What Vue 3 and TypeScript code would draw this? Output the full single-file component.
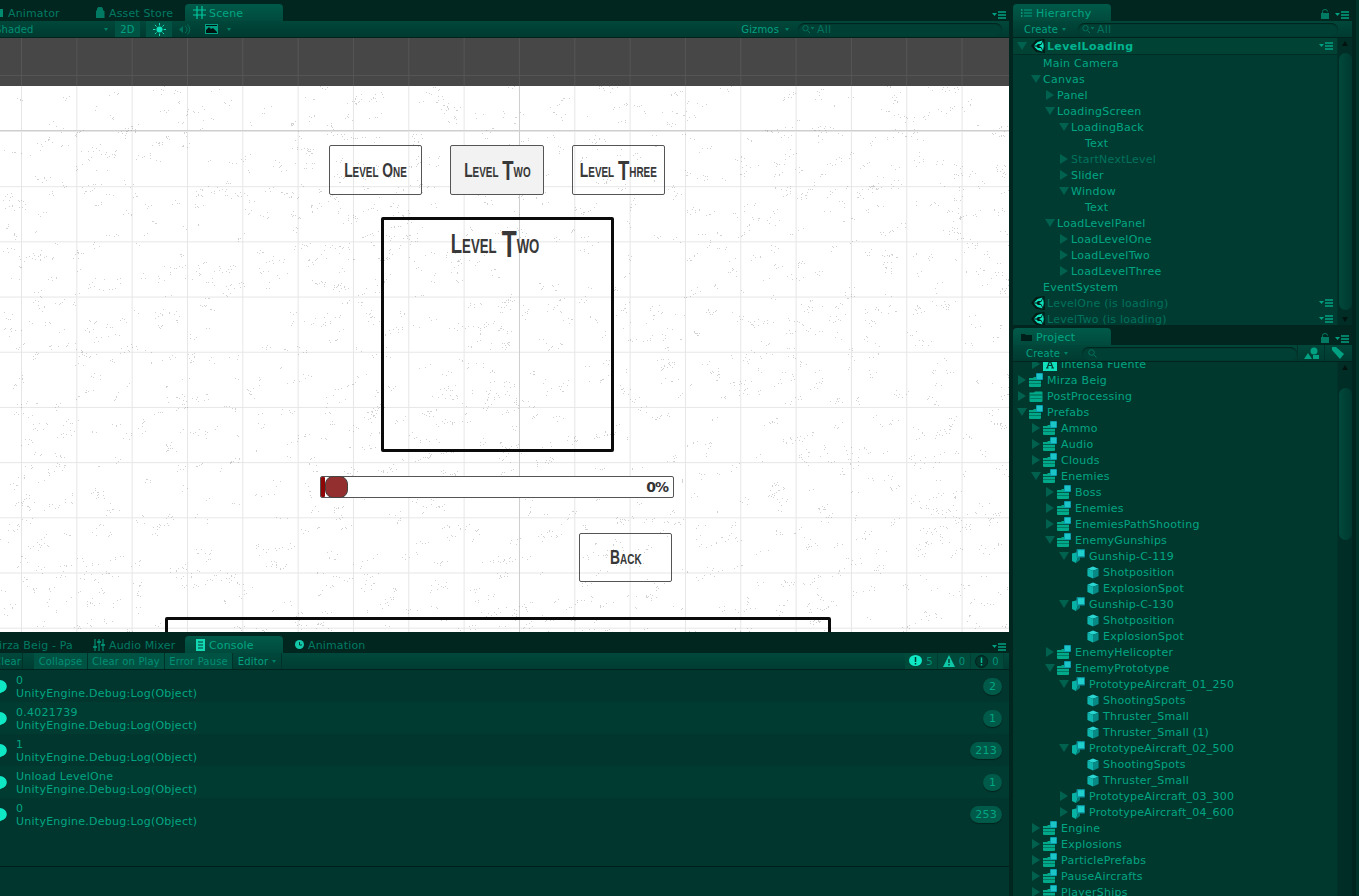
<script setup lang="ts">
type Row = { d: number; t: string; a?: 'o' | 'c'; i?: string; dim?: boolean; bold?: boolean; menu?: boolean }

const hierarchy: Row[] = [
  { d: 0, t: 'LevelLoading', a: 'o', i: 'unity', bold: true, menu: true },
  { d: 1, t: 'Main Camera' },
  { d: 1, t: 'Canvas', a: 'o' },
  { d: 2, t: 'Panel', a: 'c' },
  { d: 2, t: 'LoadingScreen', a: 'o' },
  { d: 3, t: 'LoadingBack', a: 'o' },
  { d: 4, t: 'Text' },
  { d: 3, t: 'StartNextLevel', a: 'c', dim: true },
  { d: 3, t: 'Slider', a: 'c' },
  { d: 3, t: 'Window', a: 'o' },
  { d: 4, t: 'Text' },
  { d: 2, t: 'LoadLevelPanel', a: 'o' },
  { d: 3, t: 'LoadLevelOne', a: 'c' },
  { d: 3, t: 'LoadLevelTwo', a: 'c' },
  { d: 3, t: 'LoadLevelThree', a: 'c' },
  { d: 1, t: 'EventSystem' },
  { d: 0, t: 'LevelOne (is loading)', i: 'unity', dim: true, menu: true },
  { d: 0, t: 'LevelTwo (is loading)', i: 'unity', dim: true, menu: true },
]

const project: Row[] = [
  { d: 1, t: 'Intensa Fuente', a: 'c', i: 'font' },
  { d: 0, t: 'Mirza Beig', a: 'c', i: 'pack' },
  { d: 0, t: 'PostProcessing', a: 'c', i: 'folder' },
  { d: 0, t: 'Prefabs', a: 'o', i: 'pack' },
  { d: 1, t: 'Ammo', a: 'c', i: 'pack' },
  { d: 1, t: 'Audio', a: 'c', i: 'pack' },
  { d: 1, t: 'Clouds', a: 'c', i: 'pack' },
  { d: 1, t: 'Enemies', a: 'o', i: 'pack' },
  { d: 2, t: 'Boss', a: 'c', i: 'pack' },
  { d: 2, t: 'Enemies', a: 'c', i: 'pack' },
  { d: 2, t: 'EnemiesPathShooting', a: 'c', i: 'pack' },
  { d: 2, t: 'EnemyGunships', a: 'o', i: 'pack' },
  { d: 3, t: 'Gunship-C-119', a: 'o', i: 'model' },
  { d: 4, t: 'Shotposition', i: 'cube' },
  { d: 4, t: 'ExplosionSpot', i: 'cube' },
  { d: 3, t: 'Gunship-C-130', a: 'o', i: 'model' },
  { d: 4, t: 'Shotposition', i: 'cube' },
  { d: 4, t: 'ExplosionSpot', i: 'cube' },
  { d: 2, t: 'EnemyHelicopter', a: 'c', i: 'pack' },
  { d: 2, t: 'EnemyPrototype', a: 'o', i: 'pack' },
  { d: 3, t: 'PrototypeAircraft_01_250', a: 'o', i: 'model' },
  { d: 4, t: 'ShootingSpots', i: 'cube' },
  { d: 4, t: 'Thruster_Small', i: 'cube' },
  { d: 4, t: 'Thruster_Small (1)', i: 'cube' },
  { d: 3, t: 'PrototypeAircraft_02_500', a: 'o', i: 'model' },
  { d: 4, t: 'ShootingSpots', i: 'cube' },
  { d: 4, t: 'Thruster_Small', i: 'cube' },
  { d: 3, t: 'PrototypeAircraft_03_300', a: 'c', i: 'model' },
  { d: 3, t: 'PrototypeAircraft_04_600', a: 'c', i: 'model' },
  { d: 1, t: 'Engine', a: 'c', i: 'pack' },
  { d: 1, t: 'Explosions', a: 'c', i: 'pack' },
  { d: 1, t: 'ParticlePrefabs', a: 'c', i: 'pack' },
  { d: 1, t: 'PauseAircrafts', a: 'c', i: 'pack' },
  { d: 1, t: 'PlayerShips', a: 'c', i: 'pack' },
]

const logs = [
  { m: '0', n: 2 },
  { m: '0.4021739', n: 1 },
  { m: '1', n: 213 },
  { m: 'Unload LevelOne', n: 1 },
  { m: '0', n: 253 },
]

let seed = 7
const rnd = () => {
  seed = (seed * 16807) % 2147483647
  return seed / 2147483647
}
const makeSpeckle = (count: number) => {
  let d = ''
  for (let i = 0; i < count; i++) {
    const x = Math.round(rnd() * 1009)
    const y = Math.round(rnd() * 546)
    const n = 2 + Math.floor(rnd() * 4)
    for (let k = 0; k < n; k++) {
      const px = x + k + Math.round(rnd() * 10) - 5
      const py = y - k + Math.round(rnd() * 5)
      d += `M${px} ${py}h1v1h-1z`
    }
  }
  return d
}
const speckle = makeSpeckle(1500)
const indent = (r: Row) => r.d * 14
</script>

<template>
  <div class="editor">
    <svg class="defs" width="0" height="0" aria-hidden="true">
      <defs>
        <symbol id="unity" viewBox="0 0 14 14">
          <path d="M0 7 5 1 13.5 0 14 14 5 13Z" fill="#001a16" />
          <path d="M3 6.4 6.5 3 11.5 1.6 10 5H7L5.5 6.4Z" fill="#0fe0bc" />
          <path d="M3 7.6H5.5L7 9h3l1.5 3.4L6.5 11Z" fill="#0fe0bc" />
          <path d="M8 7 10.6 5.6 12 2.6 12.8 7 12 11.4 10.6 8.4Z" fill="#0fe0bc" />
        </symbol>
        <symbol id="folder" viewBox="0 0 14 14">
          <path d="M.5 3.5h4.5l1-1h6.5a1 1 0 0 1 1 1v8.5a1 1 0 0 1-1 1h-11a1 1 0 0 1-1-1Z" fill="#00a98a" />
          <path d="M.5 6h13" stroke="#005a49" />
          <path d="M.5 9.5h13" stroke="#007c66" />
        </symbol>
        <symbol id="pack" viewBox="0 0 14 14">
          <path d="M0 5h4l1-1h6a1 1 0 0 1 1 1v8a1 1 0 0 1-1 1H1a1 1 0 0 1-1-1Z" fill="#00a98a" />
          <path d="M0 7.5h12" stroke="#005a49" />
          <path d="M0 10.5h12" stroke="#007c66" />
          <rect x="7" y="0" width="7" height="7" rx="1" fill="#0a9fae" />
          <rect x="8" y="1" width="5" height="5" fill="#1cc6c6" />
        </symbol>
        <symbol id="model" viewBox="0 0 14 14">
          <path d="M1 4.5 7 3v5l-2 6-4-2Z" fill="#06b3a5" />
          <path d="M5 14 7 8h2v3Z" fill="#047e78" />
          <rect x="5.5" y="0" width="8.5" height="8.5" rx="1" fill="#0a8f98" />
          <rect x="7" y="1.2" width="6" height="6" fill="#1fd0cc" />
        </symbol>
        <symbol id="cube" viewBox="0 0 14 14">
          <path d="M7 0 13.5 2.5 7 5 .5 2.5Z" fill="#2ad6d2" />
          <path d="M.5 2.5 7 5v9L.5 11Z" fill="#0fb4ac" />
          <path d="M13.5 2.5 7 5v9l6.5-3Z" fill="#078a86" />
        </symbol>
        <symbol id="fontA" viewBox="0 0 14 14">
          <rect width="14" height="14" fill="#12e0bc" />
          <path d="M3 11.5h2.6v-1H5l.5-1.4h3l.5 1.4h-.7v1H11v-1h-.7L7.7 3H6.2L3.7 10.5H3Zm2.9-3.4L7 5l1.1 3.1Z" fill="#003a30" />
        </symbol>
        <symbol id="bubble" viewBox="0 0 16 16">
          <path d="M8 1a7 6.4 0 0 1 1.5 12.6L5 15.5l.8-2.2A6.5 6.5 0 0 1 8 1Z" fill="#0fe8c4" />
        </symbol>
        <symbol id="menu" viewBox="0 0 14 8">
          <path d="M0 2h5L2.5 5Z" fill="#00a182" />
          <path d="M6 1h8M6 4h8M6 7h8" stroke="#00a182" stroke-width="1.4" />
        </symbol>
        <symbol id="lock" viewBox="0 0 8 10">
          <rect y="4" width="8" height="6" fill="#007a63" />
          <path d="M1.5 4V2.5a2.5 2 0 0 1 5 0" fill="none" stroke="#007a63" />
        </symbol>
      </defs>
    </svg>

    <main class="left">
      <section class="scene-panel">
        <div class="tabs">
          <div class="tab tab-animator"><i class="grip"></i><span>Animator</span></div>
          <div class="tab tab-store">
            <svg width="10" height="11" viewBox="0 0 10 11"><path d="M0 4h8v7H0Z M1.5 4V2a2.5 2 0 0 1 5 0v2" fill="#007a63" stroke="#007a63" /></svg>
            <span>Asset Store</span>
          </div>
          <div class="tab active">
            <svg width="13" height="13" viewBox="0 0 13 13"><path d="M4 0v13M9 0v13M0 4h13M0 9h13" stroke="#00c9a2" stroke-width="1.2" /></svg>
            <span>Scene</span>
          </div>
          <svg class="menu-ico" width="14" height="8"><use href="#menu" /></svg>
        </div>
        <div class="toolbar scene-tools">
          <span class="shaded">Shaded</span><b class="caret c1"></b>
          <span class="tbtn two-d">2D</span>
          <span class="tbtn sun">
            <svg width="13" height="13" viewBox="0 0 13 13"><circle cx="6.5" cy="6.5" r="3" fill="#12e0bc" /><path d="M6.5 0v2.4M6.5 10.6V13M0 6.5h2.4M10.6 6.5H13M1.9 1.9l1.7 1.7M9.4 9.4l1.7 1.7M1.9 11.1l1.7-1.7M9.4 3.6l1.7-1.7" stroke="#12e0bc" /></svg>
          </span>
          <span class="sound">
            <svg width="14" height="11" viewBox="0 0 14 11"><path d="M0 5.5 4 2v7Z" fill="#00705c" /><path d="M6 2a4 4 0 0 1 0 7M8.5 0.5a7 7 0 0 1 0 10" fill="none" stroke="#00705c" /></svg>
          </span>
          <span class="pic">
            <svg width="13" height="10" viewBox="0 0 13 10"><rect width="13" height="10" fill="#00a182" /><path d="M1 9V6l3-3 2 2 2-1 4 4v1Z" fill="#00120f" /><rect x="1" y="1" width="11" height="1" fill="#00120f" /></svg>
          </span>
          <b class="caret c2"></b>
          <span class="spacer"></span>
          <span class="gizmos">Gizmos</span><b class="caret c3"></b>
          <div class="search scene-search">
            <svg width="13" height="8" viewBox="0 0 13 8"><circle cx="3.5" cy="3.2" r="2.7" fill="none" stroke="#00725d" /><path d="M5.5 5.5 8 8" stroke="#00725d" /><path d="M8.5 2h4L10.5 4.5Z" fill="#00725d" /></svg>
            <span>All</span>
          </div>
        </div>
        <div class="viewport">
          <div class="void"></div>
          <div class="stage">
            <svg class="speckle" width="1009" height="546" viewBox="0 0 1009 546"><path :d="speckle" fill="#8a8a8a" fill-opacity="0.38" /></svg>
            <div class="ui">
              <div class="level-buttons">
                <div class="btn hand"><span class="sx">Level One</span></div>
                <div class="btn hand pressed"><span class="sx">Level <span class="tee">T</span>wo</span></div>
                <div class="btn hand"><span class="sx">Level <span class="tee">T</span>hree</span></div>
              </div>
              <div class="window">
                <div class="hand win-title"><span class="sx">Level <span class="tee">T</span>wo</span></div>
              </div>
              <div class="slider">
                <span class="fill"></span>
                <span class="knob"></span>
                <span class="pct">0%</span>
              </div>
              <div class="back-row"><div class="btn hand back"><span class="sx">Back</span></div></div>
            </div>
            <div class="big-panel"></div>
          </div>
        </div>
      </section>

      <section class="console-panel">
        <div class="tabs bottom-tabs">
          <div class="tab tab-mirza"><span>irza Beig - Pa</span></div>
          <div class="tab tab-mixer">
            <svg width="12" height="12" viewBox="0 0 12 12"><path d="M2 0v12M6 0v12M10 0v12" stroke="#00a182" /><path d="M0 8h4M4 3h4M8 6h4" stroke="#00a182" stroke-width="1.6" /></svg>
            <span>Audio Mixer</span>
          </div>
          <div class="tab active tab-console">
            <svg width="9" height="12" viewBox="0 0 9 12"><rect width="9" height="12" fill="#12d8b4" /><path d="M2 3h5M2 6h5M2 9h5" stroke="#003a30" /></svg>
            <span>Console</span>
          </div>
          <div class="tab tab-anim">
            <svg width="9" height="9" viewBox="0 0 9 9"><circle cx="4.5" cy="4.5" r="4.5" fill="#12c8a8" /><path d="M4.5 2v3H7" fill="none" stroke="#003a30" /></svg>
            <span>Animation</span>
          </div>
          <svg class="menu-ico" width="14" height="8"><use href="#menu" /></svg>
        </div>
        <div class="toolbar console-tools">
          <span class="ct clear">Clear</span>
          <span class="ct pressed collapse">Collapse</span>
          <span class="ct pressed cop">Clear on Play</span>
          <span class="ct pressed err">Error Pause</span>
          <span class="ct editor-btn">Editor<b class="caret"></b></span>
          <span class="spacer"></span>
          <div class="counters">
            <span class="counter"><svg width="13" height="12" viewBox="0 0 13 12"><ellipse cx="6.5" cy="5.5" rx="6.5" ry="5.5" fill="#0fe8c4" /><path d="M6.5 2v5M6.5 8v1.5" stroke="#003a30" stroke-width="1.5" /></svg>5</span>
            <span class="counter"><svg width="12" height="12" viewBox="0 0 12 12"><path d="M6 0 12 12H0Z" fill="#0fc8a8" /><path d="M6 4v4M6 9v1.5" stroke="#003a30" stroke-width="1.4" /></svg>0</span>
            <span class="counter"><svg width="13" height="13" viewBox="0 0 13 13"><circle cx="6.5" cy="6.5" r="6" fill="#00352c" stroke="#00201b" /><path d="M6.5 2.5v5.5M6.5 9v1.5" stroke="#0bb896" stroke-width="1.5" /></svg>0</span>
          </div>
        </div>
        <div class="logs">
          <div v-for="(l, i) in logs" :key="i" class="log" :class="{ alt: i % 2 === 1 }">
            <svg class="bubble" width="16" height="16"><use href="#bubble" /></svg>
            <div class="log-text">
              <div>{{ l.m }}</div>
              <div>UnityEngine.Debug:Log(Object)</div>
            </div>
            <span class="badge">{{ l.n }}</span>
          </div>
        </div>
        <div class="status"></div>
      </section>
    </main>

    <aside class="right">
      <section class="hier">
        <div class="tabs side-tabs">
          <div class="tab active side-tab">
            <svg width="11" height="8" viewBox="0 0 11 8"><path d="M3 1h8M3 4h8M3 7h8" stroke="#00a182" stroke-width="1.2" /><path d="M0 1h1.5M0 4h1.5M0 7h1.5" stroke="#12d8b4" stroke-width="1.2" /></svg>
            <span>Hierarchy</span>
          </div>
          <svg class="lock" width="8" height="10"><use href="#lock" /></svg>
          <svg class="menu-ico" width="14" height="8"><use href="#menu" /></svg>
        </div>
        <div class="toolbar side-tools">
          <span class="create hier-create">Create<b class="caret"></b></span>
          <div class="search side-search">
            <svg width="13" height="8" viewBox="0 0 13 8"><circle cx="3.5" cy="3.2" r="2.7" fill="none" stroke="#00725d" /><path d="M5.5 5.5 8 8" stroke="#00725d" /><path d="M8.5 2h4L10.5 4.5Z" fill="#00725d" /></svg>
            <span>All</span>
          </div>
        </div>
        <div class="tree-wrap hier-wrap">
          <div class="tree">
            <div v-for="(r, i) in hierarchy" :key="i" class="row hier-row" :class="{ scene: r.bold, dim: r.dim }" :style="{ paddingLeft: indent(r) + 'px' }">
              <span class="arrow" :class="r.a"></span>
              <svg v-if="r.i" class="ico" width="14" height="14"><use href="#unity" /></svg>
              <span class="label">{{ r.t }}</span>
              <svg v-if="r.menu" class="row-menu" width="14" height="8"><use href="#menu" /></svg>
            </div>
          </div>
          <div class="scrollbar">
            <i class="up"></i>
            <span class="thumb"></span>
            <i class="down"></i>
          </div>
        </div>
      </section>

      <section class="proj">
        <div class="tabs side-tabs proj-tabs">
          <div class="tab active side-tab">
            <svg width="11" height="8" viewBox="0 0 11 8"><path d="M0 1h4l1 1h6v6H0Z" fill="#001f1a" /></svg>
            <span>Project</span>
          </div>
          <svg class="lock" width="8" height="10"><use href="#lock" /></svg>
          <svg class="menu-ico" width="14" height="8"><use href="#menu" /></svg>
        </div>
        <div class="toolbar side-tools">
          <span class="create proj-create">Create<b class="caret"></b></span>
          <div class="search proj-search">
            <svg width="9" height="9" viewBox="0 0 9 9"><circle cx="3.5" cy="3.5" r="2.8" fill="none" stroke="#00725d" /><path d="M5.5 5.5 8.5 8.5" stroke="#00725d" /></svg>
          </div>
          <span class="tool-ico">
            <svg width="15" height="12" viewBox="0 0 15 12"><circle cx="10" cy="4" r="3.5" fill="#00a182" /><path d="M0 12 4 6l4 6Z" fill="#00a182" /><rect x="9" y="8" width="6" height="4" fill="#00a182" /></svg>
          </span>
          <span class="tool-ico">
            <svg width="12" height="12" viewBox="0 0 12 12"><path d="M0 3V0h4l8 7-4 5Z" fill="#00a182" /></svg>
          </span>
        </div>
        <div class="tree-wrap proj-wrap">
          <div class="tree proj-tree">
            <div v-for="(r, i) in project" :key="i" class="row proj-row" :style="{ paddingLeft: indent(r) + 'px' }">
              <span class="arrow" :class="r.a"></span>
              <svg class="ico" :class="{ small: r.i === 'cube' }" width="14" height="14"><use :href="r.i === 'font' ? '#fontA' : '#' + r.i" /></svg>
              <span class="label">{{ r.t }}</span>
            </div>
          </div>
          <div class="scrollbar proj-bar">
            <i class="up"></i>
            <span class="thumb"></span>
          </div>
        </div>
      </section>
    </aside>
    <div class="edge"></div>
  </div>
</template>

<style>
html, body { margin: 0; background: #00241e; overflow: hidden; }
</style>

<style scoped>
.editor {
  width: 1359px;
  height: 896px;
  display: grid;
  grid-template-columns: 1009px 339px 3px;
  column-gap: 4px;
  background: #00261f;
  color: #00a683;
  font: 11px "DejaVu Sans", sans-serif;
  letter-spacing: 0.25px;
  overflow: hidden;
  position: relative;
}
.defs { position: absolute; }
.edge { background: #00342b; }
.left { display: flex; flex-direction: column; height: 896px; overflow: hidden; }
.scene-panel { height: 632px; display: flex; flex-direction: column; overflow: hidden; }
.console-panel { flex: 1; display: flex; flex-direction: column; min-height: 0; }

.tabs {
  height: 21px;
  flex: none;
  display: flex;
  position: relative;
  align-items: flex-end;
  box-sizing: border-box;
  padding-top: 4px;
  background: #00261f;
  white-space: nowrap;
}
.tab {
  height: 17px;
  display: flex;
  align-items: center;
  gap: 3px;
  box-sizing: border-box;
  color: #007a63;
  font-size: 11px;
  letter-spacing: 0.15px;
}
.tab span { padding-top: 2px; }
.tab.active {
  width: 98px;
  background: linear-gradient(#005a49, #004a3c);
  border-radius: 4px 4px 0 0;
  color: #00a683;
  padding-left: 8px;
}
.grip { width: 3px; height: 8px; background: #008a70; flex: none; margin-right: 2px; }
.tab-animator { width: 96px; }
.tab-store { width: 89px; }
.menu-ico { position: absolute; right: 3px; bottom: 2px; }

.toolbar {
  height: 17px;
  flex: none;
  display: flex;
  align-items: center;
  background: linear-gradient(#00473a, #003a30);
  border-bottom: 1px solid #00231d;
  box-sizing: border-box;
  color: #008f74;
  font-size: 10px;
  letter-spacing: 0.15px;
  white-space: nowrap;
}
.spacer { flex: 1; }
.caret {
  display: inline-block;
  width: 0;
  height: 0;
  border: 2.5px solid transparent;
  border-top: 3px solid #00826a;
  border-bottom: 0;
}
.shaded { margin-left: -5px; width: 109px; flex: none; }
.c1 { margin-right: 7px; }
.tbtn { height: 16px; display: flex; align-items: center; justify-content: center; background: #005243; }
.two-d { width: 25px; color: #00a182; margin-right: 6px; }
.sun { width: 26px; margin-right: 7px; }
.sound { width: 26px; display: flex; }
.pic { display: flex; margin-right: 9px; }
.gizmos { color: #00a182; margin-right: 6px; }
.c3 { margin-right: 9px; }
.search {
  height: 13px;
  border-radius: 7px;
  background: #003f34;
  box-shadow: inset 0 1px 1px #00231d;
  display: flex;
  align-items: center;
  padding-left: 4px;
  gap: 2px;
  box-sizing: border-box;
  color: #00725d;
  font-size: 11px;
}
.scene-search { width: 204px; margin-right: 7px; }

.viewport { flex: 1; display: flex; flex-direction: column; min-height: 0; }
.void {
  height: 48px;
  flex: none;
  background-color: #474747;
  background-image:
    linear-gradient(#555, #555),
    linear-gradient(90deg, #555 1px, transparent 1px);
  background-size: 100% 1px, 55.33px 100%;
  background-position: 0 37px, 21px 0;
  background-repeat: no-repeat, repeat-x;
}
.stage {
  flex: 1;
  position: relative;
  overflow: hidden;
  background-color: #fff;
  background-image:
    linear-gradient(#cfcfcf, #cfcfcf),
    linear-gradient(#cfcfcf, #cfcfcf),
    linear-gradient(90deg, #e6e6e6 1px, transparent 1px),
    linear-gradient(#e6e6e6 1px, transparent 1px);
  background-size: 100% 1px, 1px 100%, 55.33px 100%, 100% 55.2px;
  background-position: 0 44px, 519px 0, 21px 0, 0 45px;
  background-repeat: no-repeat, no-repeat, repeat-x, repeat-y;
}
.speckle { position: absolute; inset: 0; pointer-events: none; }
.ui {
  position: relative;
  width: 354px;
  margin-left: 320px;
  padding-top: 59px;
  display: flex;
  flex-direction: column;
  color: #2e2e2e;
}
.hand {
  font-family: "Liberation Sans", sans-serif;
  font-weight: 700;
  font-variant: small-caps;
  letter-spacing: 0;
  color: #383838;
}
.sx {
  display: inline-block;
  flex: none;
  transform: scaleX(0.66);
  white-space: pre;
}
.level-buttons { display: flex; gap: 28px; margin-left: 9px; }
.btn {
  width: 93px;
  height: 50px;
  box-sizing: border-box;
  border: 1px solid #555;
  border-radius: 2px;
  display: flex;
  align-items: center;
  justify-content: center;
  font-size: 21px;
  white-space: pre;
}
.level-buttons .btn:nth-child(2) { width: 94px; }
.pressed.btn { background: #f2f2f2; }
.tee { font-size: 28px; position: relative; top: 3px; line-height: 0; }
.window {
  width: 233px;
  height: 235px;
  margin: 22px 0 0 61px;
  box-sizing: border-box;
  border: 3px solid #0a0a0a;
  border-radius: 2px;
}
.win-title {
  display: flex;
  justify-content: center;
  font-size: 28px;
  line-height: 48px;
}
.win-title .sx { margin-left: -5px; }
.win-title .tee { font-size: 37px; top: 4px; }
.slider {
  height: 22px;
  margin-top: 24px;
  box-sizing: border-box;
  border: 1px solid #555;
  border-radius: 2px;
  background: #fff;
  display: flex;
  align-items: center;
  position: relative;
}
.fill { width: 4px; height: 20px; background: #8e0606; flex: none; border-radius: 1px; }
.knob {
  width: 23px;
  height: 22px;
  flex: none;
  background: #93302f;
  border: 1px solid #444;
  box-sizing: border-box;
  border-radius: 8px;
}
.pct {
  margin-left: auto;
  margin-right: 5px;
  font: 700 14px "DejaVu Sans", sans-serif;
  letter-spacing: -1px;
  color: #333;
}
.back-row { display: flex; justify-content: flex-end; margin-top: 35px; padding-right: 2px; }
.back { height: 49px; padding-bottom: 2px; }
.big-panel {
  position: absolute;
  left: 165px;
  top: 531px;
  width: 666px;
  height: 60px;
  box-sizing: border-box;
  border: 3px solid #0a0a0a;
  border-radius: 2px;
}

.tab-mirza { width: 94px; margin-left: -1px; }
.tab-mixer { width: 92px; gap: 4px; }
.tab.tab-console { padding-left: 11px; gap: 4px; }
.tab-anim { margin-left: 12px; gap: 4px; }
.console-tools { background: linear-gradient(#00483b, #003c32); }
.ct { height: 16px; display: flex; align-items: center; justify-content: center; box-sizing: border-box; border-right: 1px solid #00322a; color: #008f74; }
.ct.pressed { background: #005243; }
.clear { width: 23px; justify-content: flex-end; margin-right: 11px; padding-right: 1px; flex: none; }
.collapse { width: 54px; }
.cop { width: 77px; }
.err { width: 68px; }
.editor-btn { width: 49px; gap: 4px; color: #00a182; }
.counters { display: flex; margin-right: 5px; background: #004a3c; height: 16px; }
.counter { width: 33px; box-sizing: border-box; display: flex; align-items: center; justify-content: center; gap: 4px; border-right: 1px solid #003d32; color: #00927a; }
.logs { flex: none; }
.log {
  height: 32px;
  position: relative;
  background: #00362d;
  display: flex;
  align-items: center;
}
.log.alt { background: #003b31; }
.bubble { position: absolute; left: -8px; top: 9px; }
.log-text { margin-left: 16px; padding-top: 2px; line-height: 13px; color: #00a683; font-size: 11px; }
.badge {
  position: absolute;
  right: 7px;
  top: 8px;
  height: 17px;
  min-width: 19px;
  padding: 0 5px;
  box-sizing: border-box;
  border-radius: 9px;
  background: #005a49;
  box-shadow: 0 1px 1px #00231d;
  color: #00a683;
  text-align: center;
  line-height: 17px;
}
.status { flex: 1; background: #00362d; }
.status::after { content: ""; display: block; height: 1px; background: #001f1a; margin-top: 36px; }

.right { display: flex; flex-direction: column; height: 896px; width: 339px; }
.hier { height: 325px; flex: none; display: flex; flex-direction: column; overflow: hidden; }
.proj { flex: 1; display: flex; flex-direction: column; min-height: 0; margin-top: 3px; }
.side-tabs { height: 21px; padding-top: 4px; }
.proj-tabs { height: 17px; padding-top: 0; }
.tab.side-tab { width: 98px; padding-left: 8px; gap: 4px; letter-spacing: 0.25px; }
.lock { position: absolute; right: 23px; bottom: 2px; }
.side-tools { height: 17px; }
.create { display: flex; align-items: center; gap: 4px; flex: none; color: #00a182; box-sizing: border-box; }
.hier-create { width: 54px; margin-left: 11px; }
.proj-create { width: 56px; margin-left: 13px; }
.side-search { flex: none; width: 260px; }
.proj-search { flex: none; width: 215px; padding-left: 6px; }
.tool-ico { width: 27px; height: 16px; flex: none; display: flex; align-items: center; justify-content: center; border-left: 1px solid #00322a; box-sizing: border-box; }

.tree-wrap { flex: 1; display: flex; min-height: 0; overflow: hidden; background: #003b31; }
.tree { flex: 1; min-width: 0; }
.proj-tree { margin-top: -6px; }
.proj-wrap { background: #00382e; }
.row {
  height: 16px;
  display: flex;
  align-items: center;
  position: relative;
  color: #00a683;
  white-space: nowrap;
  font-size: 11px;
  line-height: 16px;
}
.label { padding-top: 2px; }
.row.dim .label { color: #00725d; }
.row.scene { height: 17px; background: #004234; border-bottom: 1px solid #002e26; box-sizing: border-box; font-weight: 700; color: #00b490; letter-spacing: 0.35px; }
.arrow { width: 16px; height: 16px; flex: none; position: relative; }
.arrow.c::before {
  content: "";
  position: absolute;
  left: 5px;
  top: 3px;
  border: 5px solid transparent;
  border-left: 8px solid #00614f;
  border-right: 0;
}
.arrow.o::before {
  content: "";
  position: absolute;
  left: 4px;
  top: 4px;
  border: 5px solid transparent;
  border-top: 8px solid #00614f;
  border-bottom: 0;
}
.ico { flex: none; margin-right: 4px; }
.hier-row .ico { margin-left: 2px; margin-right: 2px; }
.ico.small { width: 12px; height: 13px; margin-left: 2px; margin-right: 4px; }
.row-menu { position: absolute; right: 4px; top: 4px; }
.scrollbar {
  width: 15px;
  flex: none;
  background: #002e26;
  border-left: 1px solid #00322a;
  box-sizing: border-box;
  display: flex;
  flex-direction: column;
  align-items: center;
  padding: 3px 0;
}
.thumb { flex: 1; width: 13px; margin: 7px 0; border-radius: 7px; background: linear-gradient(90deg, #00483b, #00392f); }
.proj-bar .thumb { flex: none; height: 152px; margin-top: 18px; }
.up { width: 0; height: 0; border: 3.5px solid transparent; border-bottom: 5px solid #00130f; border-top: 0; }
.down { width: 0; height: 0; border: 3.5px solid transparent; border-top: 5px solid #00130f; border-bottom: 0; }
</style>
